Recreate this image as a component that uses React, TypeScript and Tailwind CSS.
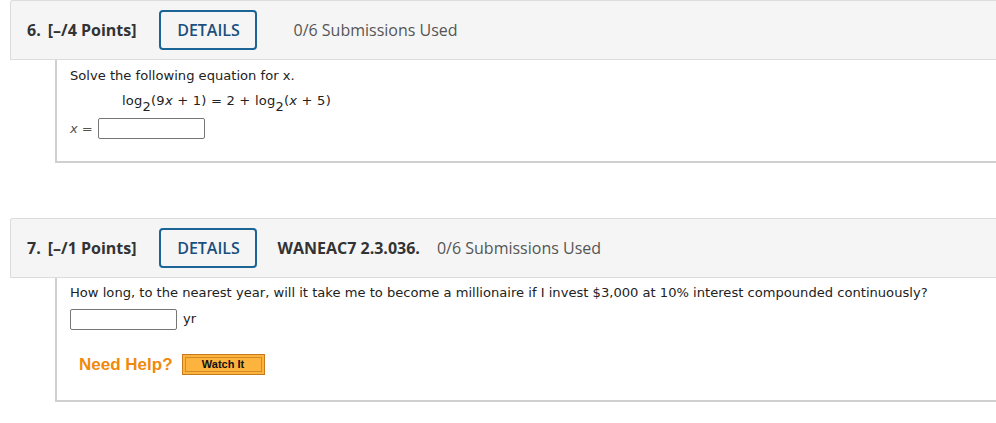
export default function App() {
  return (
    <div className="min-h-[423px] w-[996px] overflow-hidden bg-white">
      {/* question 6 */}
      <div className="ml-[10px] w-[1000px]">
        <div className="flex h-[60px] items-center rounded-tl-[3px] border border-r-0 border-[#dcdcdc] bg-[#f5f5f5] pl-[16px] font-['Open_Sans',sans-serif] text-[16px]">
          <span className="font-bold text-[#333]">6.</span>
          <span className="ml-[7px] font-bold text-[#333]">[–/4 Points]</span>
          <button className="ml-[23px] h-[40px] w-[98px] rounded-[4px] border-2 border-[#1a6496] text-[16px] font-semibold text-[#1b4f7d]">DETAILS</button>
          <span className="ml-[36px] text-[#555]">0/6 Submissions Used</span>
        </div>
        <div className="ml-[45px] h-[103px] border-b-2 border-l-2 border-[#d0d0d0] pl-[13px] pt-[6px] font-['DejaVu_Sans',Verdana,sans-serif] text-[13.1px] text-[#222]">
          <p>Solve the following equation for x.</p>
          <p className="ml-[52px] mt-[5px] tracking-[0.2px]">
            log<sub className="bottom-[-0.5em] text-[13px]">2</sub>(9<i>x</i> + 1) = 2 + log<sub className="bottom-[-0.5em] text-[13px]">2</sub>(<i>x</i> + 5)
          </p>
          <div className="mt-[8px] flex items-center">
            <i className="text-[#555]">x</i>
            <span className="ml-[4px] text-[#555]">=</span>
            <input className="ml-[5px] h-[21px] w-[107px] rounded-[2px] border border-[#767676]" />
          </div>
        </div>
      </div>

      {/* question 7 */}
      <div className="ml-[10px] mt-[55px] w-[1000px]">
        <div className="flex h-[60px] items-center rounded-tl-[3px] border border-r-0 border-[#dcdcdc] bg-[#f5f5f5] pl-[16px] font-['Open_Sans',sans-serif] text-[16px]">
          <span className="font-bold text-[#333]">7.</span>
          <span className="ml-[7px] font-bold text-[#333]">[–/1 Points]</span>
          <button className="ml-[23px] h-[40px] w-[98px] rounded-[4px] border-2 border-[#1a6496] text-[16px] font-semibold text-[#1b4f7d]">DETAILS</button>
          <span className="ml-[20px] font-bold text-[#333]">WANEAC7 2.3.036.</span>
          <span className="ml-[17px] text-[#555]">0/6 Submissions Used</span>
        </div>
        <div className="ml-[45px] h-[124px] border-b-2 border-l-2 border-[#d0d0d0] pl-[13px] pt-[5px] font-['DejaVu_Sans',Verdana,sans-serif] text-[13.1px] text-[#222]">
          <p>How long, to the nearest year, will it take me to become a millionaire if I invest $3,000 at 10% interest compounded continuously?</p>
          <div className="mt-[6px] flex items-center">
            <input className="h-[21px] w-[107px] rounded-[2px] border border-[#767676]" />
            <span className="ml-[6px]">yr</span>
          </div>
          <div className="ml-[9px] mt-[22px] flex items-center">
            <span className="font-['Liberation_Sans',Arial,sans-serif] text-[17px] font-bold text-[#f08a0c]">Need Help?</span>
            <button className="ml-[9px] flex h-[21px] w-[83px] items-center justify-center border border-[#c77a1a] bg-[#fdb43e] p-[2px]">
              <span className="flex h-full w-full items-center justify-center border border-[#d58a22] font-['Liberation_Sans',Arial,sans-serif] text-[11px] font-bold text-[#111]">Watch It</span>
            </button>
          </div>
        </div>
      </div>
    </div>
  );
}
